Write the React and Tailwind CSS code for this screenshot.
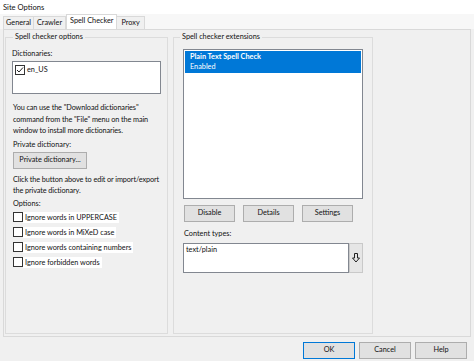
import React from "react";

const FONT = { fontFamily: "Lato, 'Noto Sans', sans-serif" };

const Check = ({ checked }) => (
  <span className="w-[10px] h-[10px] border border-[#333] bg-white flex items-center justify-center shrink-0">
    {checked && (
      <svg width="8" height="8" viewBox="0 0 8 8">
        <path d="M1 4 L3 6 L7 1.5" stroke="#222" strokeWidth="1" fill="none" />
      </svg>
    )}
  </span>
);

const Btn = ({ children, className = "" }) => (
  <button
    type="button"
    className={`h-[17px] border border-[#adadad] bg-[#e1e1e1] text-[7.3px] text-[#111] flex items-center justify-center ${className}`}
  >
    {children}
  </button>
);

const options = [
  "Ignore words in UPPERCASE",
  "Ignore words in MiXeD case",
  "Ignore words containing numbers",
  "Ignore forbidden words",
];

export default function App() {
  return (
    <div
      className="w-[474px] h-[361px] bg-[#f0f0f0] text-[7.3px] text-[#111] flex flex-col overflow-hidden"
      style={FONT}
    >
      {/* title */}
      <div className="h-[14px] bg-white px-[3px] pt-[1px] leading-[12px] text-[7.6px]">Site Options</div>

      {/* tabs */}
      <div className="h-[15px] flex items-end px-[3px] bg-[#f7f7f7]">
        <div className="h-[13px] px-[2px] border border-b-0 border-[#d9d9d9] bg-[#f0f0f0] leading-[12px]">General</div>
        <div className="h-[13px] px-[3px] border border-b-0 border-l-0 border-[#d9d9d9] bg-[#f0f0f0] leading-[12px]">Crawler</div>
        <div className="h-[15px] px-[3px] border border-b-0 border-[#d9d9d9] bg-white leading-[12px]">Spell Checker</div>
        <div className="h-[13px] px-[4px] border border-b-0 border-l-0 border-[#d9d9d9] bg-[#f0f0f0] leading-[12px]">Proxy</div>
      </div>

      {/* page */}
      <div className="mx-[3px] h-[308px] border border-[#d9d9d9] flex gap-[5px] pl-[1px] pt-[2px] pb-[2px]">
        <fieldset className="w-[163px] border border-[#dcdcdc] pl-[6px] pr-[2px] pb-[4px]">
          <legend className="px-[2px] leading-[10px] ml-[1px]">Spell checker options</legend>
          <div className="mt-[6px] leading-[11px]">Dictionaries:</div>
          <div className="mt-[2px] mr-[4px] h-[33px] border border-[#828790] bg-white px-[2px] pt-[3px]">
            <div className="flex items-center gap-[2px]">
              <Check checked />
              <span>en_US</span>
            </div>
          </div>
          <div className="mt-[8px] leading-[11.5px] pl-[1px] tracking-[-0.1px]">
            You can use the "Download dictionaries" command from the "File" menu on the main window to install more dictionaries.
          </div>
          <div className="mt-[2px] leading-[11px] pl-[1px]">Private dictionary:</div>
          <Btn className="mt-[2px] w-[74px] ml-[1px]">Private dictionary...</Btn>
          <div className="mt-[5px] leading-[11.5px] pl-[1px] tracking-[-0.1px]">
            Click the button above to edit or import/export the private dictionary.
          </div>
          <div className="mt-[1px] leading-[11px] pl-[1px]">Options:</div>
          <div className="mt-[3px] flex flex-col gap-[4px] pl-[1px]">
            {options.map((o) => (
              <div key={o} className="flex items-center h-[11px]">
                <Check />
                <span className="bg-white pl-[2px] pr-[2px] leading-[11px]">{o}</span>
              </div>
            ))}
          </div>
        </fieldset>

        <fieldset className="w-[200px] border border-[#dcdcdc] px-[9px] pb-[4px]">
          <legend className="px-[2px] leading-[10px] ml-[-3px]">Spell checker extensions</legend>
          <div className="mt-[7px] h-[150px] border border-[#828790] bg-white p-[1px]">
            <div className="bg-[#0078d7] text-white px-[5px] py-[1px] leading-[10px]">
              <div className="font-bold">Plain Text Spell Check</div>
              <div>Enabled</div>
            </div>
          </div>
          <div className="mt-[6px] flex gap-[8px] pl-[1px]">
            <Btn className="w-[51px]">Disable</Btn>
            <Btn className="w-[51px]">Details</Btn>
            <Btn className="w-[51px]">Settings</Btn>
          </div>
          <div className="mt-[6px] leading-[11px] pl-[1px]">Content types:</div>
          <div className="mt-[4px] flex">
            <div className="w-[166px] h-[30px] border border-[#828790] bg-white px-[2px] leading-[11px]">text/plain</div>
            <button
              type="button"
              className="w-[14px] h-[30px] border border-[#c9c9c9] bg-[#e6e6e6] flex items-center justify-center"
            >
              <svg width="8" height="10" viewBox="0 0 8 10">
                <path d="M2.5 0.5 H5.5 V5 H7.5 L4 9 L0.5 5 H2.5 Z" stroke="#222" strokeWidth="1" fill="none" />
              </svg>
            </button>
          </div>
        </fieldset>
      </div>

      {/* buttons */}
      <div className="mt-[5px] flex justify-end gap-[4px] pr-[7px]">
        <Btn className="w-[52px] !border-[#0078d7]">OK</Btn>
        <Btn className="w-[52px]">Cancel</Btn>
        <Btn className="w-[52px]">Help</Btn>
      </div>
    </div>
  );
}
